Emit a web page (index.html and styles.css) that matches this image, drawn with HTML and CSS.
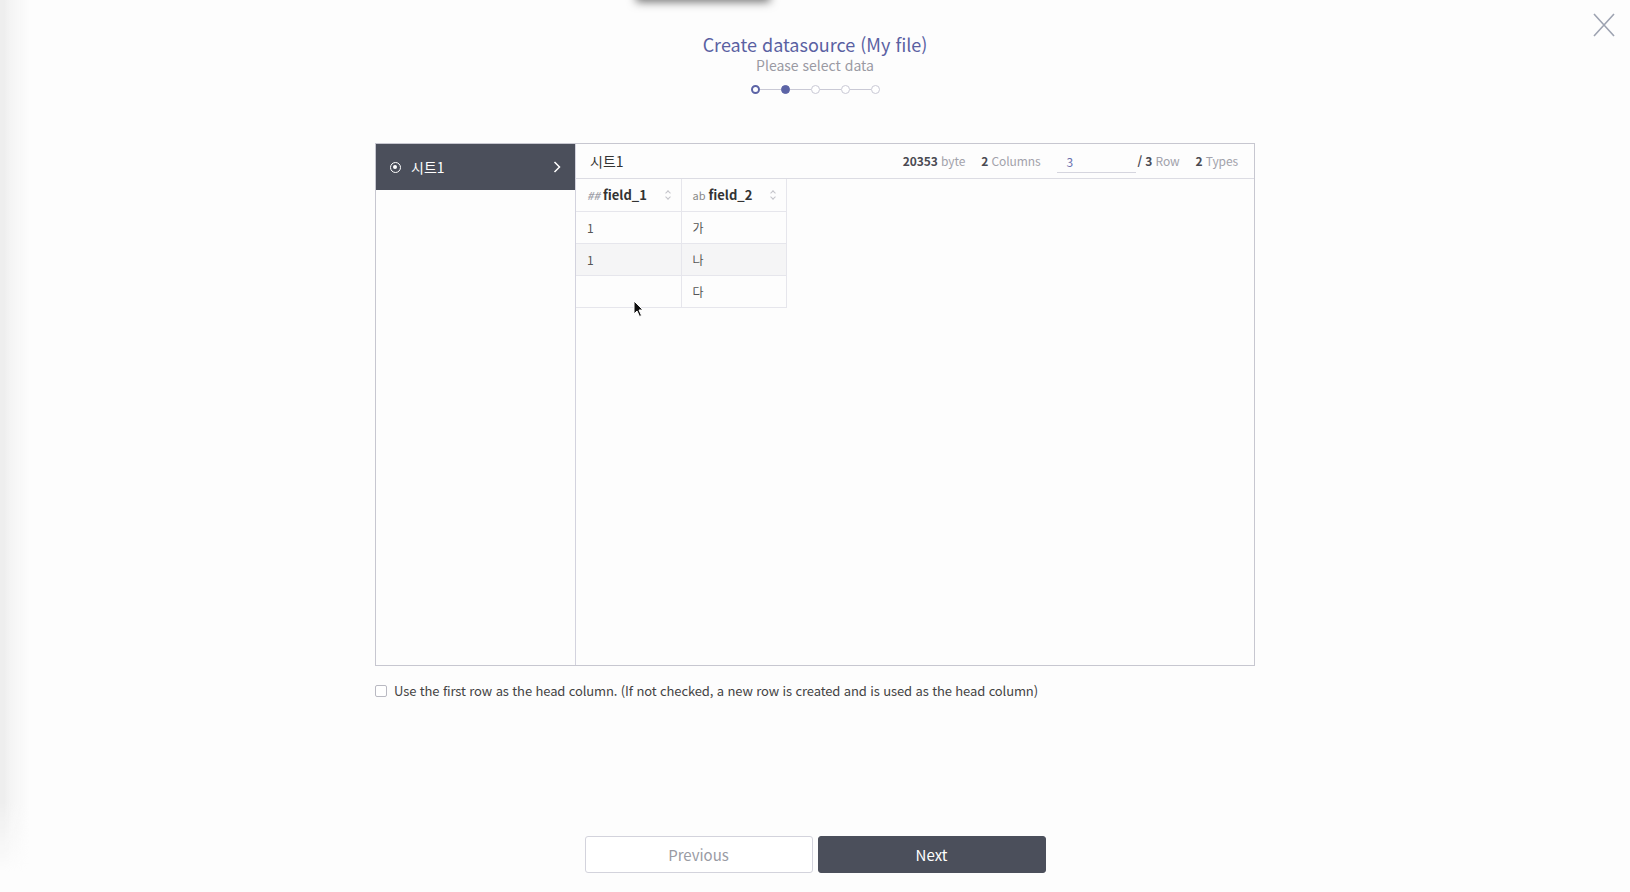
FILE: index.html
```
<!DOCTYPE html>
<html lang="ko">
<head>
    <meta charset="UTF-8">
    <meta name="viewport" content="width=device-width, initial-scale=1.0">
    <title>Create datasource</title>
    <link rel="stylesheet" href="styles.css">
</head>
<body>
    <div class="page">
        <!-- 좌측 패널 그림자 -->
        <div class="side-shade"></div>
        <!-- 상단 토스트 그림자 -->
        <div class="top-toast"></div>

        <a class="btn-close" href="#">
            <svg width="24" height="24" viewBox="0 0 24 24"><path d="M2 1 L22 23 M22 1 L2 23" stroke="#9da3b1" stroke-width="1.6" fill="none"/></svg>
        </a>

        <div class="title-area">
            <h1 class="title">Create datasource (My file)</h1>
            <p class="subtitle">Please select data</p>
            <div class="steps">
                <span class="step done"></span><span class="step-line"></span>
                <span class="step current"></span><span class="step-line"></span>
                <span class="step"></span><span class="step-line"></span>
                <span class="step"></span><span class="step-line"></span>
                <span class="step"></span>
            </div>
        </div>

        <div class="data-box">
            <div class="sheet-list">
                <div class="sheet-item active">
                    <span class="radio"></span>
                    <span class="sheet-name">시트1</span>
                    <svg class="chevron" width="8" height="12" viewBox="0 0 8 12"><path d="M1.5 1 L6.5 6 L1.5 11" stroke="#fff" stroke-width="1.5" fill="none"/></svg>
                </div>
            </div>
            <div class="sheet-view">
                <div class="view-head">
                    <span class="view-name">시트1</span>
                    <div class="stats">
                        <span><b>20353</b> byte</span>
                        <span><b>2</b> Columns</span>
                        <span class="row-input">3</span>
                        <span class="row-total"><b>/ 3</b> Row</span>
                        <span><b>2</b> Types</span>
                    </div>
                </div>
                <table class="grid">
                    <thead>
                        <tr>
                            <th><span class="type">##</span>field_1<span class="sort"></span></th>
                            <th><span class="type ab">ab</span>field_2<span class="sort"></span></th>
                        </tr>
                    </thead>
                    <tbody>
                        <tr><td>1</td><td>가</td></tr>
                        <tr class="odd"><td>1</td><td>나</td></tr>
                        <tr><td></td><td>다</td></tr>
                    </tbody>
                </table>
                <svg class="cursor" width="12" height="18" viewBox="0 0 12 18"><path d="M1 1 L1 14 L4 11 L6.5 16.5 L8.5 15.5 L6 10 L10 10 Z" fill="#111" stroke="#fff" stroke-width="1"/></svg>
            </div>
        </div>

        <label class="head-check">
            <span class="check-box"></span>
            Use the first row as the head column. (If not checked, a new row is created and is used as the head column)
        </label>

        <div class="buttons">
            <button class="btn btn-prev">Previous</button>
            <button class="btn btn-next">Next</button>
        </div>
    </div>
</body>
</html>
```

FILE: styles.css
```
* {
    margin: 0;
    padding: 0;
    box-sizing: border-box;
}

body {
    font-family: "Noto Sans CJK KR", "Noto Sans", sans-serif;
    background-color: #fdfdfd;
    color: #333;
}

.page {
    position: relative;
    height: 100vh;
    display: flex;
    flex-direction: column;
    align-items: center;
    overflow: hidden;
}

.side-shade {
    position: absolute;
    left: 0;
    top: 0;
    bottom: 20px;
    width: 30px;
    background: linear-gradient(to right, #eeeeee 0, #eeeeee 4px, rgba(240, 240, 240, 0.6) 12px, rgba(253, 253, 253, 0) 30px);
    -webkit-mask-image: linear-gradient(to bottom, #000 92%, transparent 100%);
    mask-image: linear-gradient(to bottom, #000 92%, transparent 100%);
}

.top-toast {
    position: absolute;
    top: -30px;
    left: 636px;
    width: 134px;
    height: 30px;
    background: #fff;
    box-shadow: 0 2px 10px rgba(0, 0, 0, 0.55);
}

.btn-close {
    position: absolute;
    top: 13px;
    right: 14px;
    width: 24px;
    height: 24px;
}

.title-area {
    padding-top: 32px;
    text-align: center;
}

.title {
    font-size: 18px;
    font-weight: normal;
    line-height: 24px;
    color: #5a61a2;
}

.subtitle {
    font-size: 14px;
    line-height: 18px;
    color: #9a9aa3;
}

.steps {
    display: flex;
    align-items: center;
    justify-content: center;
    margin-top: 10px;
    height: 10px;
}

.step {
    width: 9px;
    height: 9px;
    border-radius: 50%;
    border: 1.5px solid #c9c9d5;
    background: #fff;
}

.step.done {
    border: 2px solid #5c64a6;
}

.step.current {
    background: #5c64a6;
    border-color: #5c64a6;
}

.step-line {
    width: 21px;
    height: 1px;
    background: #c9c9d5;
}

/* 데이터 미리보기 박스 */
.data-box {
    margin-top: 49px;
    width: 880px;
    height: 523px;
    border: 1px solid #c7c7d0;
    display: flex;
    background: #fdfdfd;
}

.sheet-list {
    width: 200px;
    border-right: 1px solid #d3d3de;
}

.sheet-item {
    display: flex;
    align-items: center;
    height: 46px;
    padding: 0 14px;
    font-size: 14px;
}

.sheet-item.active {
    background-color: #4b4f5b;
    color: #fff;
}

.radio {
    width: 11px;
    height: 11px;
    border: 1.5px solid #fff;
    border-radius: 50%;
    margin-right: 10px;
    position: relative;
}

.radio::after {
    content: "";
    position: absolute;
    left: 2px;
    top: 2px;
    width: 4px;
    height: 4px;
    border-radius: 50%;
    background: #fff;
}

.sheet-name {
    flex: 1;
}

.sheet-view {
    flex: 1;
    position: relative;
}

.view-head {
    display: flex;
    align-items: center;
    justify-content: space-between;
    height: 35px;
    padding: 0 16px 0 14px;
    border-bottom: 1px solid #dcdce3;
}

.view-name {
    font-size: 14px;
    color: #333;
}

.stats {
    display: flex;
    align-items: center;
    font-size: 12px;
    line-height: 24px;
    letter-spacing: -0.1px;
    color: #a2a2ab;
}

.stats span {
    margin-left: 16px;
}

.stats b {
    color: #4a4a52;
    font-weight: bold;
}

.stats .row-input {
    display: block;
    width: 79px;
    height: 24px;
    margin-left: 17px;
    padding-left: 9px;
    padding-top: 1px;
    border-bottom: 1px solid #d5d5de;
    color: #6a70ad;
}

.stats .row-total {
    margin-left: 1px;
}

.grid {
    border-collapse: collapse;
    font-size: 12px;
    color: #555;
}

.grid th,
.grid td {
    width: 105px;
    height: 32px;
    padding: 0 11px;
    text-align: left;
    border: 1px solid #e6e6ec;
    border-top: none;
}

.grid th:first-child,
.grid td:first-child {
    border-left: none;
}

.grid th {
    font-size: 13px;
    font-weight: bold;
    color: #333;
    position: relative;
}

.grid .type {
    font-size: 11px;
    font-style: italic;
    font-weight: bold;
    color: #a5a5ad;
    margin-right: 3px;
}

.grid .type.ab {
    font-style: normal;
    font-weight: normal;
    color: #888;
}

.grid .sort {
    position: absolute;
    right: 10px;
    top: 11px;
    width: 6px;
    height: 10px;
}

.grid .sort::before,
.grid .sort::after {
    content: "";
    position: absolute;
    left: 1px;
    width: 3px;
    height: 3px;
    border-left: 1px solid #c3c3c9;
    border-top: 1px solid #c3c3c9;
}

.grid .sort::before {
    top: 1px;
    transform: rotate(45deg);
}

.grid .sort::after {
    top: 5px;
    transform: rotate(225deg);
}

.grid tr.odd td {
    background: #f5f5f6;
}

.cursor {
    position: absolute;
    left: 57px;
    top: 156px;
}

.head-check {
    display: flex;
    align-items: center;
    width: 880px;
    margin-top: 15px;
    font-size: 13px;
    letter-spacing: -0.12px;
    color: #444;
}

.check-box {
    width: 12px;
    height: 12px;
    border: 1px solid #b9b9c2;
    border-radius: 2px;
    background: #fff;
    margin: 0 7px 0 0;
}

.buttons {
    display: flex;
    gap: 5px;
    margin-top: auto;
    margin-bottom: 19px;
}

.btn {
    width: 228px;
    height: 37px;
    font-family: inherit;
    font-size: 15px;
    border-radius: 3px;
    cursor: pointer;
}

.btn-prev {
    background: #fff;
    border: 1px solid #d3d3dc;
    color: #9a9ba4;
}

.btn-next {
    background: #4b4f5b;
    border: 1px solid #4b4f5b;
    color: #fff;
}
```
